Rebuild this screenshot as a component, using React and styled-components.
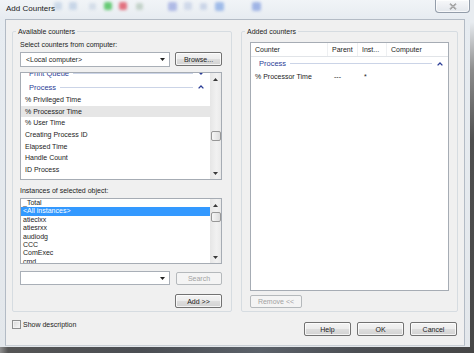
import React from 'react';
import styled, { createGlobalStyle } from 'styled-components';

const GlobalStyle = createGlobalStyle`
  html, body { margin: 0; padding: 0; }
  body {
    font-family: "Liberation Sans", Arial, sans-serif;
    font-size: 7px;
    color: #1c1c1c;
    background: #e8ecf0;
  }
  #root { width: 474px; height: 353px; overflow: hidden; }
  * { box-sizing: border-box; }
`;

const counters = [
    '% Privileged Time',
    '% Processor Time',
    '% User Time',
    'Creating Process ID',
    'Elapsed Time',
    'Handle Count',
    'ID Process',
];

const instances = ['_Total', '<All instances>', 'atieclxx', 'atiesrxx', 'audiodg', 'CCC', 'ComExec', 'cmd'];

// blurred desktop icons seen through the glass title bar
const blobs = [
    { x: 53, c: '#c6d5e7', s: 8 },
    { x: 68, c: '#c1d1e5', s: 8 },
    { x: 87, c: '#d0dae7', s: 7 },
    { x: 103, c: '#4fc35f', s: 8 },
    { x: 118, c: '#e05b6b', s: 8 },
    { x: 134, c: '#bccdc2', s: 7 },
    { x: 167, c: '#a5b1e3', s: 9 },
    { x: 183, c: '#cad4e8', s: 8 },
    { x: 198, c: '#c4d0e5', s: 7 },
    { x: 214, c: '#92b2e7', s: 9 },
    { x: 251, c: '#93aae3', s: 9 },
];

const DropArrow = () => (
    <svg width="5" height="3" viewBox="0 0 5 3"><path d="M0 0h5L2.5 3z" fill="#222" /></svg>
);

const ScrollArrow = ({ up }) => (
    <svg width="5" height="3" viewBox="0 0 5 3">
        <path d={up ? 'M0 3h5L2.5 0z' : 'M0 0h5L2.5 3z'} fill="#3a3a3a" />
    </svg>
);

const Chevron = ({ up }) => (
    <svg width="6" height="4" viewBox="0 0 6 4">
        <polyline
            points={up ? '0.6,3.4 3,1 5.4,3.4' : '0.6,0.6 3,3 5.4,0.6'}
            fill="none"
            stroke="#2b3d96"
            strokeWidth="1.3"
        />
    </svg>
);

const ScrollBar = ({ thumbTop }) => (
    <Bar>
        <ArrowBox><ScrollArrow up /></ArrowBox>
        <Track><Thumb style={{ marginTop: thumbTop }} /></Track>
        <ArrowBox><ScrollArrow /></ArrowBox>
    </Bar>
);

const App = () => {
    return (
        <>
            <GlobalStyle />
            <Frame>
                <Upper>
                    <Window>
                        <TitleBar>
                            {blobs.map((b, i) => (
                                <Blob key={i} $x={b.x} $c={b.c} $s={b.s} />
                            ))}
                            <Title>Add Counters</Title>
                            <CloseButton>
                                <svg width="8" height="7" viewBox="0 0 8 7">
                                    <path d="M1 0.8L7 6.2M7 0.8L1 6.2" stroke="#7d7d7d" strokeWidth="1.5" />
                                    <path d="M1 0.8L7 6.2M7 0.8L1 6.2" stroke="#f4f4f4" strokeWidth="0.5" />
                                </svg>
                            </CloseButton>
                        </TitleBar>

                        <Client>
                            <Groups>
                                <Group $w={220}>
                                    <Legend>Available counters</Legend>
                                    <FieldLabel>Select counters from computer:</FieldLabel>
                                    <ControlRow $mt={3}>
                                        <Combo $h={15}>
                                            <span>{'<Local computer>'}</span>
                                            <DropArrow />
                                        </Combo>
                                        <Button $w={47} $h={14}>Browse...</Button>
                                    </ControlRow>

                                    <ListBox $h={108} $mt={5.5}>
                                        <ListBody>
                                            <Scrolled $offset={-7}>
                                                <GroupRow $h={14} $right={6}>
                                                    <GroupName>Print Queue</GroupName>
                                                    <GroupLine />
                                                    <Chevron />
                                                </GroupRow>
                                                <GroupRow $h={14} $right={6}>
                                                    <GroupName>Process</GroupName>
                                                    <GroupLine />
                                                    <Chevron up />
                                                </GroupRow>
                                                {counters.map((c) => (
                                                    <CounterRow key={c} $selected={c === '% Processor Time'}>
                                                        {c}
                                                    </CounterRow>
                                                ))}
                                            </Scrolled>
                                        </ListBody>
                                        <ScrollBar thumbTop={46} />
                                    </ListBox>

                                    <FieldLabel $mt={5.5}>Instances of selected object:</FieldLabel>
                                    <ListBox $h={66} $mt={3.5}>
                                        <ListBody>
                                            {instances.map((name) => (
                                                <InstanceRow key={name} $selected={name === '<All instances>'}>
                                                    {name}
                                                </InstanceRow>
                                            ))}
                                        </ListBody>
                                        <ScrollBar thumbTop={1} />
                                    </ListBox>

                                    <ControlRow $mt={7}>
                                        <Combo $h={14}>
                                            <span />
                                            <DropArrow />
                                        </Combo>
                                        <Button $w={46} $h={13} disabled>Search</Button>
                                    </ControlRow>
                                    <ButtonEnd $mt={9}>
                                        <Button $w={47} $h={14}>{'Add >>'}</Button>
                                    </ButtonEnd>
                                </Group>

                                <Group $w={217} $right={8} $left={8}>
                                    <Legend $shift={-5}>Added counters</Legend>
                                    <ViewBox>
                                        <HeaderRow>
                                            <HeaderCell $w={77}>Counter</HeaderCell>
                                            <HeaderCell $w={30}>Parent</HeaderCell>
                                            <HeaderCell $w={29}>Inst...</HeaderCell>
                                            <HeaderCell $grow>Computer</HeaderCell>
                                        </HeaderRow>
                                        <GroupRow $h={14} $right={5}>
                                            <GroupName>Process</GroupName>
                                            <GroupLine />
                                            <Chevron up />
                                        </GroupRow>
                                        <DataRow>
                                            <Cell $w={77}>% Processor Time</Cell>
                                            <Cell $w={30} $pad={6}>---</Cell>
                                            <Cell $w={29} $pad={6}>*</Cell>
                                        </DataRow>
                                    </ViewBox>
                                    <ButtonStart $mt={4}>
                                        <Button $w={52} $h={13} disabled>{'Remove <<'}</Button>
                                    </ButtonStart>
                                </Group>
                            </Groups>

                            <Footer>
                                <CheckRow>
                                    <CheckBox />
                                    <span>Show description</span>
                                </CheckRow>
                                <DialogButtons>
                                    <Button $w={47} $h={14}>Help</Button>
                                    <Button $w={47} $h={14}>OK</Button>
                                    <Button $w={47} $h={14}>Cancel</Button>
                                </DialogButtons>
                            </Footer>
                        </Client>
                    </Window>
                    <SideShadow />
                </Upper>
                <BottomShadow />
            </Frame>
        </>
    );
};

export default App;

const Frame = styled.div`
    width: 474px;
    height: 353px;
    display: flex;
    flex-direction: column;
    background: linear-gradient(to bottom, #f1f4f7 0, #e7ecf1 18px, #e3e7eb 100%);
`;

const Upper = styled.div`
    flex: 1;
    min-height: 0;
    display: flex;
`;

const Window = styled.div`
    flex: 1;
    min-width: 0;
    display: flex;
    flex-direction: column;
    padding: 0 5px 1px 5px;
`;

const SideShadow = styled.div`
    width: 4px;
    background: linear-gradient(to bottom, #e8ecf0 0, #e8ecf0 22px, #8c8c8c 70px, #4f4f4f 140px, #474747 100%);
`;

const BottomShadow = styled.div`
    height: 6px;
    background: linear-gradient(to right, #8e8e8e 0, #555 8px, #4b4e53 30%, #5b6169 55%, #4c4f54 75%, #464646 100%);
`;

const TitleBar = styled.div`
    position: relative;
    height: 19px;
    display: flex;
    align-items: flex-start;
    justify-content: space-between;
`;

const Blob = styled.span`
    position: absolute;
    top: ${(p) => 6 - p.$s / 2}px;
    left: ${(p) => p.$x - p.$s / 2}px;
    width: ${(p) => p.$s}px;
    height: ${(p) => p.$s}px;
    border-radius: 2px;
    background: ${(p) => p.$c};
    filter: blur(1.6px);
    opacity: 0.85;
`;

const Title = styled.span`
    position: relative;
    margin-left: 1px;
    font-size: 8px;
    line-height: 18px;
    color: #1a1a1a;
`;

const CloseButton = styled.div`
    position: relative;
    width: 35px;
    height: 13px;
    margin-right: -5px;
    display: grid;
    place-items: center;
    border: 1px solid #939daa;
    border-top: 0;
    border-radius: 0 0 4px 4px;
    background: linear-gradient(to bottom, #f7f8fa, #e3e7ec);
    box-shadow: inset 0 0 0 1px rgba(255, 255, 255, 0.7);
`;

const Client = styled.div`
    flex: 1;
    display: flex;
    flex-direction: column;
    padding: 0 6px;
    background: #f0f0f0;
    border: 1px solid #b3bbc5;
    border-bottom-color: #c9cfd5;
`;

const Groups = styled.div`
    display: flex;
    justify-content: space-between;
    margin-top: 6.5px;
`;

const Group = styled.fieldset`
    margin: 0;
    min-width: 0;
    width: ${(p) => p.$w}px;
    display: flex;
    flex-direction: column;
    padding: 4px ${(p) => p.$right ?? 9}px 3px ${(p) => p.$left ?? 7}px;
    border: 1px solid #d6dce1;
    border-radius: 2px;
`;

const Legend = styled.legend`
    padding: 0 2px;
    margin-left: ${(p) => p.$shift ?? -4}px;
    font-size: 7px;
    line-height: 9px;
`;

const FieldLabel = styled.div`
    margin-top: ${(p) => p.$mt ?? 0}px;
    line-height: 9px;
`;

const ControlRow = styled.div`
    display: flex;
    align-items: center;
    justify-content: space-between;
    margin-top: ${(p) => p.$mt}px;
`;

const ButtonEnd = styled.div`
    display: flex;
    justify-content: flex-end;
    margin-top: ${(p) => p.$mt}px;
`;

const ButtonStart = styled.div`
    display: flex;
    margin-top: ${(p) => p.$mt}px;
`;

const Combo = styled.div`
    width: 150px;
    height: ${(p) => p.$h}px;
    display: flex;
    align-items: center;
    justify-content: space-between;
    padding: 0 4px 0 5px;
    background: #fff;
    border: 1px solid #a9afb7;
`;

const Button = styled.button`
    width: ${(p) => p.$w}px;
    height: ${(p) => p.$h}px;
    padding: 0;
    font-family: inherit;
    font-size: 7px;
    color: #1c1c1c;
    border: 1px solid #727272;
    border-radius: 2px;
    background: linear-gradient(to bottom, #f3f3f3 0%, #ececec 50%, #dedede 50%, #d2d2d2 100%);
    box-shadow: inset 0 0 0 1px rgba(255, 255, 255, 0.75);

    &:disabled {
        color: #a3a3a3;
        border-color: #b5b9bc;
        background: #f4f4f4;
        box-shadow: none;
    }
`;

const ListBox = styled.div`
    height: ${(p) => p.$h}px;
    margin-top: ${(p) => p.$mt}px;
    display: flex;
    overflow: hidden;
    background: #fff;
    border: 1px solid #a6acb4;
`;

const ListBody = styled.div`
    flex: 1;
    min-width: 0;
    overflow: hidden;
`;

const Scrolled = styled.div`
    margin-top: ${(p) => p.$offset}px;
`;

const GroupRow = styled.div`
    height: ${(p) => p.$h}px;
    display: flex;
    align-items: center;
    gap: 4px;
    padding: 0 ${(p) => p.$right}px 0 8px;
`;

const GroupName = styled.span`
    font-size: 7.5px;
    color: #2b3d96;
`;

const GroupLine = styled.span`
    flex: 1;
    height: 1px;
    margin-right: 1px;
    background: #cbd4e7;
`;

const CounterRow = styled.div`
    height: 11.67px;
    line-height: 11.67px;
    padding-left: 4px;
    white-space: nowrap;
    background: ${(p) => (p.$selected ? '#e6e6e6' : 'transparent')};
`;

const InstanceRow = styled.div`
    height: 8.4px;
    line-height: 8.4px;
    padding-left: 2px;
    white-space: nowrap;
    color: ${(p) => (p.$selected ? '#fff' : 'inherit')};
    background: ${(p) => (p.$selected ? '#3399ff' : 'transparent')};
`;

const Bar = styled.div`
    width: 11px;
    display: flex;
    flex-direction: column;
    background: linear-gradient(to right, #e6e6e6, #f1f1f1 60%, #e9e9e9);
`;

const ArrowBox = styled.div`
    height: 12px;
    display: grid;
    place-items: center;
`;

const Track = styled.div`
    flex: 1;
    display: flex;
    flex-direction: column;
    align-items: center;
`;

const Thumb = styled.div`
    width: 10px;
    height: 10px;
    border: 1px solid #979797;
    border-radius: 2px;
    background: linear-gradient(to right, #f6f6f6, #dddddd);
`;

const ViewBox = styled.div`
    flex: 1;
    margin-top: 2px;
    display: flex;
    flex-direction: column;
    background: #fff;
    border: 1px solid #a6acb4;
`;

const HeaderRow = styled.div`
    height: 14px;
    display: flex;
    border-bottom: 1px solid #e1e4e8;
`;

const HeaderCell = styled.div`
    ${(p) => (p.$grow ? 'flex: 1;' : `width: ${p.$w}px;`)}
    display: flex;
    align-items: center;
    padding-left: 4px;
    white-space: nowrap;
    border-right: ${(p) => (p.$grow ? 'none' : '1px solid #eef0f2')};
`;

const DataRow = styled.div`
    height: 11.5px;
    display: flex;
    align-items: center;
`;

const Cell = styled.div`
    width: ${(p) => p.$w}px;
    padding-left: ${(p) => p.$pad ?? 4}px;
    white-space: nowrap;
`;

const Footer = styled.div`
    flex: 1;
    display: flex;
    align-items: flex-start;
    justify-content: space-between;
`;

const CheckRow = styled.label`
    display: flex;
    align-items: center;
    gap: 2px;
    margin-top: 8px;
    line-height: 9px;
`;

const CheckBox = styled.span`
    width: 9px;
    height: 9px;
    border: 1px solid #8e8f8f;
    background: linear-gradient(135deg, #d9d9d9, #f7f7f7);
    box-shadow: inset 0 0 0 1px #f2f2f2;
`;

const DialogButtons = styled.div`
    display: flex;
    gap: 6px;
    margin-top: 10px;
    margin-right: 1px;
`;
